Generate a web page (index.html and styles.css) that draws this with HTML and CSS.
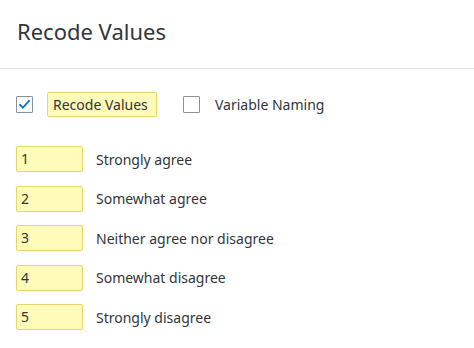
FILE: index.html
```html
<!DOCTYPE html>
<html>
<head>
<meta charset="utf-8">
<link rel="stylesheet" href="styles.css">
</head>
<body>
<div class="dialog">
  <header class="header">
    <h1 class="title">Recode Values</h1>
  </header>
  <div class="content">
    <div class="options">
      <label class="option">
        <span class="checkbox checked">
          <svg viewBox="0 0 16 16" width="13" height="13"><path d="M2.5 8.5 L6 12 L13.5 3.5" fill="none" stroke="#0a6ed1" stroke-width="2.2" stroke-linecap="square"/></svg>
        </span>
        <span class="option-label focused">Recode Values</span>
      </label>
      <label class="option">
        <span class="checkbox"></span>
        <span class="option-label">Variable Naming</span>
      </label>
    </div>
    <div class="rows">
      <div class="row"><div class="input">1</div><span class="row-label">Strongly agree</span></div>
      <div class="row"><div class="input">2</div><span class="row-label">Somewhat agree</span></div>
      <div class="row"><div class="input">3</div><span class="row-label">Neither agree nor disagree</span></div>
      <div class="row"><div class="input">4</div><span class="row-label">Somewhat disagree</span></div>
      <div class="row"><div class="input">5</div><span class="row-label">Strongly disagree</span></div>
    </div>
  </div>
</div>
</body>
</html>
```
FILE: styles.css
```css
html, body {
  margin: 0;
  padding: 0;
  background: #ffffff;
}
body {
  font-family: "Noto Sans", "Open Sans", sans-serif;
  color: #32363a;
  width: 474px;
  height: 348px;
  overflow: hidden;
}
.header {
  border-bottom: 1px solid #e4e4e4;
  display: flex;
  align-items: center;
  padding-left: 17px;
  box-sizing: border-box;
  height: 69px;
}
.title {
  margin: 0;
  font-size: 22px;
  font-weight: 400;
  color: #32363a;
  padding-bottom: 6px;
}
.content {
  padding: 23px 16px 0 16px;
}
.options {
  display: flex;
  align-items: center;
  height: 25px;
}
.option {
  display: flex;
  align-items: center;
  margin-right: 26px;
}
.checkbox {
  width: 17px;
  height: 17px;
  box-sizing: border-box;
  border: 1px solid #89919a;
  border-radius: 1px;
  background: #fff;
  display: flex;
  align-items: center;
  justify-content: center;
  margin-right: 14px;
}
.option-label {
  font-size: 14px;
  line-height: 23px;
  border: 1px solid transparent;
  border-radius: 2px;
}
.option-label.focused {
  padding: 0 5px;
  background: #fffbb9;
  border-color: #e9d96b;
  width: 98px;
}
.rows {
  margin-top: 29px;
  display: flex;
  flex-direction: column;
  gap: 13.5px;
}
.row {
  display: flex;
  align-items: center;
}
.input {
  width: 67px;
  height: 26px;
  box-sizing: border-box;
  background: #fffbb9;
  border: 1px solid #e6d46d;
  border-radius: 2px;
  font-size: 14px;
  line-height: 24px;
  padding-left: 4px;
  color: #32363a;
  margin-right: 13px;
}
.row-label {
  font-size: 14px;
  color: #32363a;
}
```
